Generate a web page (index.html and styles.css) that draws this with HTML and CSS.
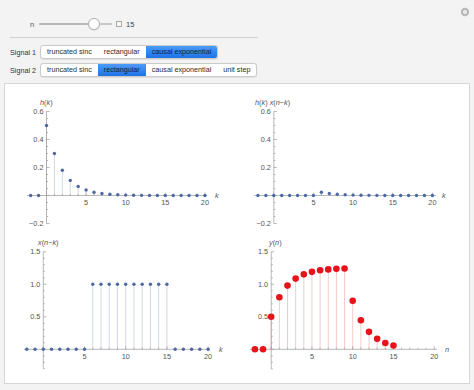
FILE: index.html
```html
<!DOCTYPE html>
<html>
<head>
    <title>Discrete Convolution</title>
    <meta charset="utf-8">
    <link rel="stylesheet" href="styles.css">
</head>
<body>
    <div class="app">
        <svg class="gear" width="10" height="10" viewBox="0 0 10 10">
            <circle cx="5" cy="5" r="4.2" fill="#b9b9b9"/>
            <circle cx="5" cy="5" r="2" fill="#ececec"/>
        </svg>

        <div class="slider-row">
            <span class="var-name">n</span>
            <div class="slider">
                <div class="track" style="width: 49px"></div>
                <div class="thumb"></div>
                <div class="track track--rest"></div>
            </div>
            <span class="plus-box"></span>
            <span class="slider-value">15</span>
        </div>

        <div class="divider"></div>

        <div class="setter-row">
            <span class="setter-label">Signal 1</span>
            <div class="setter">
                <button class="setter__btn">truncated sinc</button>
                <button class="setter__btn">rectangular</button>
                <button class="setter__btn is-active">causal exponential</button>
            </div>
        </div>
        <div class="setter-row">
            <span class="setter-label">Signal 2</span>
            <div class="setter">
                <button class="setter__btn">truncated sinc</button>
                <button class="setter__btn is-active">rectangular</button>
                <button class="setter__btn">causal exponential</button>
                <button class="setter__btn">unit step</button>
            </div>
        </div>

        <div class="plots">
            <svg id="plot-h" class="plot" viewBox="5 84 232 150"></svg>
            <svg id="plot-prod" class="plot" viewBox="237 84 232 150"></svg>
            <svg id="plot-x" class="plot" viewBox="5 234 232 149"></svg>
            <svg id="plot-y" class="plot" viewBox="237 234 232 149"></svg>
        </div>
    </div>

    <script>
        var NS = 'http://www.w3.org/2000/svg';
        var n = 15;

        // signals
        function h(k) { return k < 0 ? 0 : 0.5 * Math.pow(0.6, k); }
        function x(m) { return (m >= 0 && m <= 9) ? 1 : 0; }
        function y(m) {
            var s = 0;
            for (var k = 0; k <= m; k++) s += h(k) * x(m - k);
            return s;
        }

        function el(tag, attrs, parent) {
            var e = document.createElementNS(NS, tag);
            for (var a in attrs) e.setAttribute(a, attrs[a]);
            parent.appendChild(e);
            return e;
        }

        function label(parent, parts, attrs) {
            var t = el('text', attrs, parent);
            parts.forEach(function (p) {
                var s = el('tspan', p[1] ? { 'font-style': 'italic' } : {}, t);
                s.textContent = p[0];
            });
            return t;
        }

        function drawPlot(id, o) {
            var svg = document.getElementById(id);
            var X = function (k) { return o.x0 + k * o.xs; };
            var Y = function (v) { return o.y0 - v * o.ys; };

            // stems
            o.points.forEach(function (p) {
                if (Math.abs(p[1]) > 0.001) {
                    el('line', { x1: X(p[0]), y1: Y(0), x2: X(p[0]), y2: Y(p[1]), class: 'stem', stroke: o.stem }, svg);
                }
            });

            // axes
            el('line', { x1: o.xa, y1: Y(0), x2: o.xb, y2: Y(0), class: 'axis' }, svg);
            el('line', { x1: X(0), y1: Y(o.yMax), x2: X(0), y2: Y(o.yMin), class: 'axis' }, svg);

            // x ticks
            for (var k = -2; k <= 20; k++) {
                var len = (k % 5 === 0) ? 3 : 1.6;
                el('line', { x1: X(k), y1: Y(0), x2: X(k), y2: Y(0) - len, class: 'axis' }, svg);
                if (k > 0 && k % 5 === 0) {
                    var t = el('text', { x: X(k), y: Y(0) + 9.5, class: 'tick-label', 'text-anchor': 'middle' }, svg);
                    t.textContent = k;
                }
            }

            // y ticks
            var ratio = Math.round(o.major / o.minor);
            for (var i = Math.round(o.yMin / o.minor); i <= Math.round(o.yMax / o.minor); i++) {
                var v = i * o.minor;
                var major = i % ratio === 0;
                el('line', { x1: X(0), y1: Y(v), x2: X(0) + (major ? 3 : 1.6), y2: Y(v), class: 'axis' }, svg);
                if (major && i !== 0) {
                    var txt = el('text', { x: X(0) - 3, y: Y(v) + 2.6, class: 'tick-label', 'text-anchor': 'end' }, svg);
                    txt.textContent = (v < 0 ? '\u2212' : '') + Math.abs(v).toFixed(1);
                }
            }

            // axis labels
            label(svg, [[o.xlabel, true]], { x: o.xlabelX, y: Y(0) + 2.5, class: 'axis-label' });
            label(svg, o.ylabel, { x: o.ylabelX, y: Y(o.yMax) - 6.5, class: 'axis-label' });

            // points
            o.points.forEach(function (p) {
                el('circle', { cx: X(p[0]), cy: Y(p[1]), r: o.r, fill: o.color }, svg);
            });
        }

        function range(a, b, f) {
            var out = [];
            for (var k = a; k <= b; k++) out.push([k, f(k)]);
            return out;
        }

        var BLUE = '#4d68a3', BLUE_STEM = '#c4cee2', RED = '#e8121a', RED_STEM = '#f6bcbc';

        drawPlot('plot-h', {
            x0: 46.5, xs: 7.92, y0: 195.5, ys: 140, xa: 27, xb: 207,
            yMin: -0.2, yMax: 0.6, major: 0.2, minor: 0.05,
            xlabel: 'k', xlabelX: 215, ylabel: [['h', true], ['(', false], ['k', true], [')', false]], ylabelX: 40,
            points: range(-2, 20, h), color: BLUE, stem: BLUE_STEM, r: 1.7
        });

        drawPlot('plot-prod', {
            x0: 273.8, xs: 7.93, y0: 195.5, ys: 140, xa: 254, xb: 436,
            yMin: -0.2, yMax: 0.6, major: 0.2, minor: 0.05,
            xlabel: 'k', xlabelX: 442,
            ylabel: [['h', true], ['(', false], ['k', true], [') ', false], ['x', true], ['(', false], ['n', true], ['\u2212', false], ['k', true], [')', false]],
            ylabelX: 255,
            points: range(-2, 20, function (k) { return h(k) * x(n - k); }), color: BLUE, stem: BLUE_STEM, r: 1.7
        });

        drawPlot('plot-x', {
            x0: 43.3, xs: 8.24, y0: 349.3, ys: 65, xa: 24, xb: 210,
            yMin: -0.3, yMax: 1.5, major: 0.5, minor: 0.1,
            xlabel: 'k', xlabelX: 219,
            ylabel: [['x', true], ['(', false], ['n', true], ['\u2212', false], ['k', true], [')', false]], ylabelX: 38,
            points: range(-2, 20, function (k) { return x(n - k); }), color: BLUE, stem: BLUE_STEM, r: 1.7
        });

        drawPlot('plot-y', {
            x0: 271.2, xs: 8.15, y0: 349.3, ys: 65, xa: 250, xb: 437,
            yMin: -0.3, yMax: 1.5, major: 0.5, minor: 0.1,
            xlabel: 'n', xlabelX: 445,
            ylabel: [['y', true], ['(', false], ['n', true], [')', false]], ylabelX: 269,
            points: range(-2, n, y), color: RED, stem: RED_STEM, r: 3.3
        });
    </script>
</body>
</html>
```

FILE: styles.css
```css
body {
    margin: 0;
    background-color: #f3f3f3;
    font-family: "Liberation Sans", Arial, sans-serif;
    color: #333;
}

.app {
    position: relative;
    width: 474px;
    height: 390px;
    overflow: hidden;
}

.gear {
    position: absolute;
    top: 7px;
    right: 4px;
}

/* slider */
.slider-row {
    display: flex;
    align-items: center;
    height: 12px;
    margin-top: 18px;
    padding-left: 30px;
    font-size: 7.5px;
    color: #555;
}

.var-name {
    width: 9px;
}

.slider {
    display: flex;
    align-items: center;
    width: 73px;
}

.track {
    height: 2px;
    background: #b8b8b8;
    border-radius: 1px;
}

.track--rest {
    flex: 1;
    background: #c8c8c8;
}

.thumb {
    width: 10px;
    height: 10px;
    border: 1px solid #b0b0b0;
    border-radius: 50%;
    background: #fff;
    box-shadow: 0 0.5px 1px rgba(0, 0, 0, 0.15);
}

.plus-box {
    width: 4px;
    height: 4px;
    margin-left: 4px;
    border: 1px solid #a8a8a8;
    background: #f8f8f8;
}

.slider-value {
    margin-left: 4px;
    color: #444;
}

.divider {
    width: 248px;
    height: 1px;
    margin: 7px 0 0 10px;
    background: #cfcfcf;
}

/* setter bars */
.setter-row {
    display: flex;
    align-items: center;
    margin-top: 4px;
    padding-left: 10px;
}

.divider + .setter-row {
    margin-top: 7px;
}

.setter-label {
    width: 30px;
    font-size: 7.2px;
    color: #333;
}

.setter {
    display: flex;
    height: 14px;
    box-sizing: border-box;
    border: 1px solid #cbcbcb;
    border-radius: 3px;
    background: #fff;
    overflow: hidden;
    box-shadow: 0 0.5px 1px rgba(0, 0, 0, 0.08);
}

.setter__btn {
    border: none;
    margin: 0;
    padding: 0 6px;
    background: none;
    font-family: "Liberation Sans", Arial, sans-serif;
    font-size: 7.2px;
    color: #2a2a2a;
    line-height: 12px;
}

.setter__btn.is-active {
    background: linear-gradient(#4b9bf8, #1f72e6);
    color: #0c1f45;
}

/* plots */
.plots {
    display: grid;
    grid-template-columns: 232px 232px;
    grid-template-rows: 150px 149px;
    width: 464px;
    margin: 6px 0 0 4px;
    border: 1px solid #d6d6d6;
    background: #fff;
}

.plot {
    display: block;
    width: 232px;
    height: 100%;
}

.plot .axis {
    stroke: #9a9a9a;
    stroke-width: 0.7;
}

.plot .stem {
    stroke-width: 0.8;
}

.tick-label {
    font-family: "Liberation Sans", Arial, sans-serif;
    font-size: 7.3px;
    fill: #555;
}

.axis-label {
    font-family: "Liberation Sans", Arial, sans-serif;
    font-size: 7.3px;
    fill: #555;
}
```
